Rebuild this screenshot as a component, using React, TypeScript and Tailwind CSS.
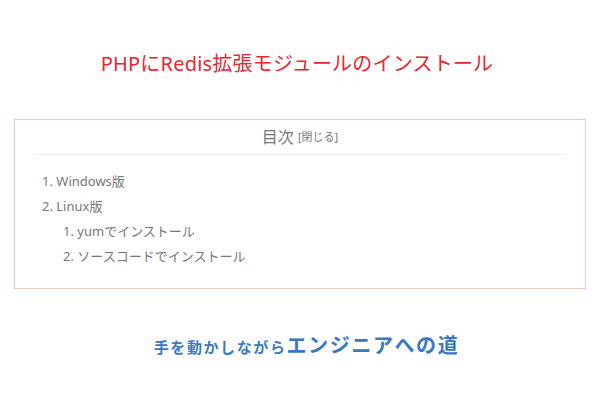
const items = [
  { label: 'Windows版', children: [] as string[] },
  { label: 'Linux版', children: ['yumでインストール', 'ソースコードでインストール'] },
]

export default function App() {
  return (
    <div
      className="w-[600px] h-[400px] bg-white overflow-hidden"
      style={{ fontFamily: '"Noto Sans", "Noto Sans CJK JP", sans-serif' }}
    >
      <div className="pt-[50px] h-[119px]">
        <h1 className="text-center text-[20px] leading-[28px] text-[#e8262f] tracking-[0.2px] pr-[6px]">
          PHPにRedis拡張モジュールのインストール
        </h1>
      </div>

      <div className="mx-[14px] h-[170px] border border-[#efc9c0] px-5">
        <div className="flex items-center justify-center gap-1 h-[35px] border-b border-[#ececec] text-[#777]">
          <span className="text-[16px]">目次</span>
          <span className="text-[11px]">[閉じる]</span>
        </div>
        <ol className="pt-[14px] pl-[7px] text-[13px] text-[#777]">
          {items.map((item, i) => (
            <li key={item.label}>
              <div className="h-[25px] leading-[25px]">
                {i + 1}. {item.label}
              </div>
              {item.children.length > 0 && (
                <ol className="pl-[21px]">
                  {item.children.map((c, j) => (
                    <li key={c} className="h-[25px] leading-[25px]">
                      {j + 1}. {c}
                    </li>
                  ))}
                </ol>
              )}
            </li>
          ))}
        </ol>
      </div>

      <div className="pt-[42px] pl-[13px] text-center font-bold text-[#3a79bd] tracking-[1.6px]">
        <span className="text-[15px]">手を動かしながら</span>
        <span className="text-[20px]">エンジニアへの道</span>
      </div>
    </div>
  )
}
